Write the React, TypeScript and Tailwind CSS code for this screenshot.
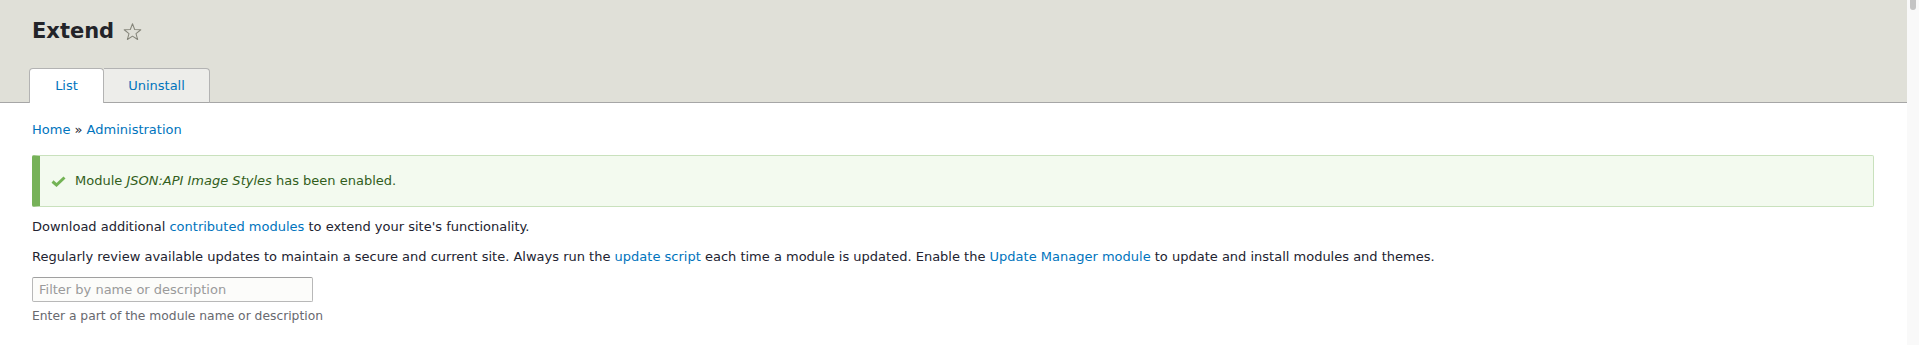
import React from "react";

const font = { fontFamily: '"DejaVu Sans", "Liberation Sans", sans-serif' };

function Star() {
  return (
    <svg width="19" height="18" viewBox="0 0 18 17.5" className="ml-[9px] mt-[1px]">
      <polygon
        points="9,0.7 11.12,6.29 17.08,6.57 12.42,10.31 14,16.08 9,12.8 4,16.08 5.58,10.31 0.92,6.57 6.88,6.29"
        fill="none"
        stroke="#85857a"
        strokeWidth="1"
        strokeLinejoin="round"
      />
    </svg>
  );
}

function Check() {
  return (
    <svg width="15" height="11" viewBox="0 0 15 11" className="shrink-0">
      <polyline points="1.5,5.5 5.5,9 13.5,1.5" fill="none" stroke="#73b355" strokeWidth="3" />
    </svg>
  );
}

export default function App() {
  return (
    <div className="flex h-[345px] w-full overflow-hidden bg-white text-[13px] text-[#222330]" style={font}>
      <div className="min-w-0 flex-1">
        {/* Page header with title and tabs */}
        <header className="border-b border-[#a6a6a6] bg-[#e0e0d8] pl-8 pr-[33px] pt-[18px]">
          <div className="flex items-center">
            <h1 className="text-[21px] font-bold leading-[26px] text-[#232429]">Extend</h1>
            <Star />
          </div>
          <ul className="-mb-px ml-[-3px] mt-[24px] flex items-end">
            <li className="flex h-[35px] w-[75px] items-center justify-center rounded-t-[4px] border border-b-0 border-[#b3b3b3] bg-white pb-[1px] text-[#0074bd]">
              List
            </li>
            <li className="flex h-[35px] w-[106px] items-center justify-center rounded-tr-[4px] border border-l-0 border-[#b3b3b3] border-b-[#a6a6a6] bg-[#ededea] text-[#0074bd]">
              Uninstall
            </li>
          </ul>
        </header>

        <main className="pl-8 pr-[33px]">
          <nav className="mt-[17px] leading-[20px]">
            <span className="text-[#0074bd]">Home</span>
            <span> » </span>
            <span className="text-[#0074bd]">Administration</span>
          </nav>

          <div className="mt-[15px] flex h-[52px] items-center gap-[9px] rounded-[2px] border border-l-[8px] border-[#c9e1bd] border-l-[#77b259] bg-[#f3faef] pl-[11px] text-[#325e1c]">
            <Check />
            <span>
              Module <em>JSON:API Image Styles</em> has been enabled.
            </span>
          </div>

          <p className="mt-[10px] leading-[20px]">
            Download additional <span className="text-[#0074bd]">contributed modules</span> to extend your site's functionality.
          </p>
          <p className="mt-[10px] leading-[20px]">
            Regularly review available updates to maintain a secure and current site. Always run the{" "}
            <span className="text-[#0074bd]">update script</span> each time a module is updated. Enable the{" "}
            <span className="text-[#0074bd]">Update Manager module</span> to update and install modules and themes.
          </p>

          <input
            type="text"
            placeholder="Filter by name or description"
            className="mt-[10px] block h-[25px] w-[281px] rounded-[2px] border border-[#b8b8b8] border-t-[#a0a0a0] bg-[#fcfcfa] px-[6px] text-[13px] placeholder:text-[#9a9a9a]"
            style={font}
          />
          <p className="mt-[5px] text-[12.3px] leading-[18px] text-[#68696f]">Enter a part of the module name or description</p>
        </main>
      </div>

      {/* Scrollbar */}
      <div className="w-[12px] shrink-0 bg-[#f9f9f9] pl-[3px]">
        <div className="h-[10px] w-[6px] rounded-b-[3px] bg-[#c4c4c4]" />
      </div>
    </div>
  );
}
